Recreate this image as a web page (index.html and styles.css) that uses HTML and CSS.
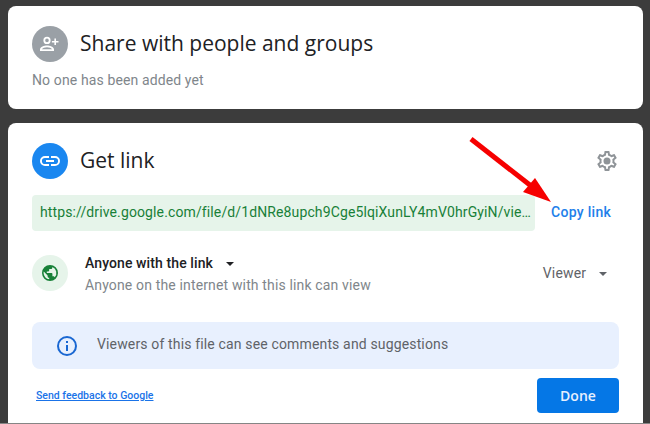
FILE: index.html
```html
<!DOCTYPE html>
<html lang="en">
<head>
    <meta charset="UTF-8">
    <title>Share</title>
    <link rel="stylesheet" href="styles.css">
</head>
<body>

<div class="page">

  <!--share card-->
    <div class="card share">
        <div class="head">
            <span class="avatar gray">
                <svg width="24" height="24" viewBox="0 0 24 24" fill="#fff"><path d="M9 12a3.6 3.6 0 1 0 0-7.200 3.600 3.600 0 0 0 0 7.200zm0-5.400a1.800 1.800 0 1 1 0 3.600 1.800 1.800 0 0 1 0-3.600zM9 13.500c-2.700 0-7 1.300-7 3.900V19h14v-1.600c0-2.600-4.300-3.900-7-3.900zm-5.100 3.700c.5-.9 3.200-1.900 5.100-1.900s4.600 1 5.100 1.900H3.900z"/><path d="M18 9V6.500h-1.600V9h-2.500v1.600h2.500v2.500H18v-2.500h2.500V9z"/></svg>
            </span>
            <h2>Share with people and groups</h2>
        </div>
        <p class="empty">No one has been added yet</p>
    </div>

  <!--link card-->
    <div class="card link">
        <div class="head">
            <span class="avatar blue">
                <svg width="24" height="24" viewBox="0 0 24 24" fill="#fff"><path d="M3.900 12A3.100 3.100 0 0 1 7 8.900h4V7H7a5 5 0 0 0 0 10h4v-1.900H7A3.100 3.100 0 0 1 3.900 12zM8 13h8v-2H8v2zm9-6h-4v1.900h4a3.100 3.100 0 0 1 0 6.200h-4V17h4a5 5 0 0 0 0-10z"/></svg>
            </span>
            <h2>Get link</h2>
            <svg class="gear" width="24" height="24" viewBox="0 0 24 24" fill="#8f9498"><path d="M19.430 12.980c.04-.32.07-.64.07-.98s-.03-.66-.07-.98l2.110-1.650c.19-.15.24-.42.12-.64l-2-3.460c-.12-.22-.39-.3-.61-.22l-2.490 1c-.52-.4-1.080-.73-1.690-.98l-.38-2.650A.488.488 0 0 0 14 2h-4c-.25 0-.46.18-.49.420l-.38 2.650c-.61.25-1.170.59-1.690.98l-2.490-1a.566.566 0 0 0-.61.220l-2 3.460c-.13.220-.07.490.12.640l2.110 1.650c-.04.320-.07.650-.07.980s.03.660.07.980l-2.110 1.650c-.19.150-.24.420-.12.640l2 3.460c.12.220.39.300.61.220l2.490-1c.52.400 1.080.730 1.690.980l.38 2.650c.03.240.24.420.49.420h4c.25 0 .46-.18.49-.42l.38-2.650c.61-.25 1.170-.59 1.690-.98l2.490 1c.23.090.49 0 .61-.22l2-3.460c.12-.22.07-.49-.12-.64l-2.110-1.650zM17.450 11.270c.04.310.05.520.05.730s-.02.430-.05.730l-.14 1.130.89.700 1.080.840-.7 1.210-1.270-.51-1.040-.42-.9.680c-.43.320-.84.560-1.250.730l-1.060.43-.16 1.130-.2 1.350h-1.400l-.19-1.350-.16-1.130-1.060-.43c-.43-.18-.83-.41-1.230-.71l-.91-.7-1.060.43-1.270.51-.7-1.210 1.080-.84.890-.7-.14-1.130c-.03-.31-.05-.54-.05-.74s.02-.43.05-.73l.14-1.130-.89-.7-1.080-.84.7-1.210 1.270.51 1.040.42.900-.68c.43-.32.840-.56 1.250-.73l1.060-.43.160-1.130.2-1.350h1.390l.19 1.350.16 1.130 1.060.43c.43.180.83.410 1.230.710l.91.700 1.060-.43 1.270-.51.7 1.210-1.070.850-.89.700.14 1.130z"/><circle cx="12" cy="12" r="3.500"/></svg>
        </div>

        <div class="url-row">
            <div class="url">https://drive.google.com/file/d/1dNRe8upch9Cge5lqiXunLY4mV0hrGyiN/vie…</div>
            <a class="copy" href="#">Copy link</a>
        </div>

        <div class="access">
            <span class="avatar green">
                <svg width="24" height="24" viewBox="0 0 24 24" fill="#188038"><path d="M12 4a8 8 0 1 0 0 16 8 8 0 0 0 0-16zm-.8 14.300A6.400 6.400 0 0 1 5.600 12c0-.5.06-.97.17-1.430L9.600 14.400v.8c0 .88.720 1.600 1.600 1.600v1.500zm5.520-2.030c-.2-.65-.8-1.120-1.520-1.120h-.8v-2.400a.8.8 0 0 0-.8-.8H8.800V10.400h1.600a.8.800 0 0 0 .8-.8V8h1.600c.88 0 1.600-.72 1.600-1.600v-.33a6.400 6.400 0 0 1 2.320 10.200z"/></svg>
            </span>
            <div class="who">
                <div class="who-top">Anyone with the link <i class="caret dark"></i></div>
                <div class="who-sub">Anyone on the internet with this link can view</div>
            </div>
            <div class="role">Viewer <i class="caret"></i></div>
        </div>

        <div class="notice">
            <svg width="24" height="24" viewBox="0 0 24 24" fill="#1967d2"><path d="M11 7h2v2h-2zm0 4h2v6h-2zm1-9a10 10 0 1 0 0 20 10 10 0 0 0 0-20zm0 18a8 8 0 1 1 0-16 8 8 0 0 1 0 16z"/></svg>
            <span>Viewers of this file can see comments and suggestions</span>
        </div>

        <div class="foot">
            <a class="feedback" href="#">Send feedback to Google</a>
            <button class="done">Done</button>
        </div>
    </div>

  <!--red arrow on top of the screenshot-->
    <svg class="arrow" width="650" height="424" viewBox="0 0 650 424">
        <path d="M471 139L535 189" stroke="#f60000" stroke-width="5" fill="none"/>
        <path d="M551 202L523 192L535 178z" fill="#f60000"/>
    </svg>
</div>

</body>
</html>
```

FILE: styles.css
```css
* {
margin: 0;
padding: 0;
box-sizing: border-box;
}

body {
background-color: #3c3c3c;
font-family: Roboto, "Liberation Sans", sans-serif;
}

.page {
width: 650px;
height: 424px;
padding: 6px 7px 0 8px;
border-bottom: 1px solid #858585;
display: flex;
flex-direction: column;
gap: 14px;
position: relative;
overflow: hidden;
}

.card {
background-color: #fff;
border-radius: 8px;
padding: 20px 24px 0;
}

.share {
height: 103px;
flex-shrink: 0;
}

.link {
flex: 1;
border-radius: 8px 8px 0 0;
}

.head {
display: flex;
align-items: center;
gap: 12px;
height: 36px;
}

.head h2 {
font-family: "Open Sans", Roboto, sans-serif;
font-size: 21px;
line-height: 34px;
margin-bottom: 2px;
font-weight: 400;
color: #202124;
}

.avatar {
width: 36px;
height: 36px;
border-radius: 50%;
display: flex;
align-items: center;
justify-content: center;
flex-shrink: 0;
}

.gray {
background-color: #9aa0a6;
}

.blue {
background-color: #1a87f0;
}

.green {
background-color: #e6f4ea;
}

.empty {
margin-top: 10px;
font-size: 14px;
line-height: 16px;
letter-spacing: .12px;
color: #80868b;
}

.gear {
margin-left: auto;
}

.url-row {
display: flex;
align-items: center;
margin-top: 16px;
}

.url {
width: 503px;
height: 36px;
padding: 0 0 0 8px;
line-height: 35px;
font-size: 14px;
letter-spacing: .12px;
color: #188038;
background-color: #e6f4ea;
border-radius: 4px;
white-space: nowrap;
}

.copy {
margin-left: 16px;
margin-bottom: 2px;
font-size: 14px;
font-weight: 500;
letter-spacing: .3px;
color: #2280ea;
text-decoration: none;
}

.access {
display: flex;
align-items: center;
margin-top: 24px;
height: 36px;
}

.who {
margin-left: 17px;
flex: 1;
}

.who-top {
font-size: 14px;
font-weight: 500;
line-height: 18px;
letter-spacing: .1px;
color: #202124;
}

.who-sub {
margin-top: 5px;
font-size: 14px;
line-height: 16px;
letter-spacing: .15px;
color: #80868b;
}

.caret {
display: inline-block;
margin-left: 9px;
vertical-align: middle;
border-left: 4px solid transparent;
border-right: 4px solid transparent;
border-top: 4px solid #5f6368;
}

.caret.dark {
border-top-color: #202124;
}

.role {
margin-right: 12px;
font-size: 14px;
letter-spacing: .2px;
color: #5f6368;
}

.notice {
display: flex;
align-items: center;
gap: 18px;
height: 47px;
margin-top: 31px;
padding-left: 23px;
padding-bottom: 3px;
background-color: #e8f0fe;
border-radius: 8px;
font-size: 14px;
letter-spacing: .15px;
color: #5f6368;
}

.notice svg {
margin-top: 3px;
}

.foot {
display: flex;
align-items: center;
justify-content: space-between;
margin-top: 9px;
}

.feedback {
margin-left: 4px;
font-size: 10.5px;
font-weight: 500;
color: #1a73e8;
}

.done {
width: 82px;
height: 35px;
border: none;
border-radius: 4px;
background-color: #0577e6;
color: #e8f0fe;
font-family: "Open Sans", Roboto, sans-serif;
font-size: 14px;
font-weight: 600;
}

/*arrow lies over the whole page*/
.arrow {
position: absolute;
left: 0;
top: 0;
}
```
